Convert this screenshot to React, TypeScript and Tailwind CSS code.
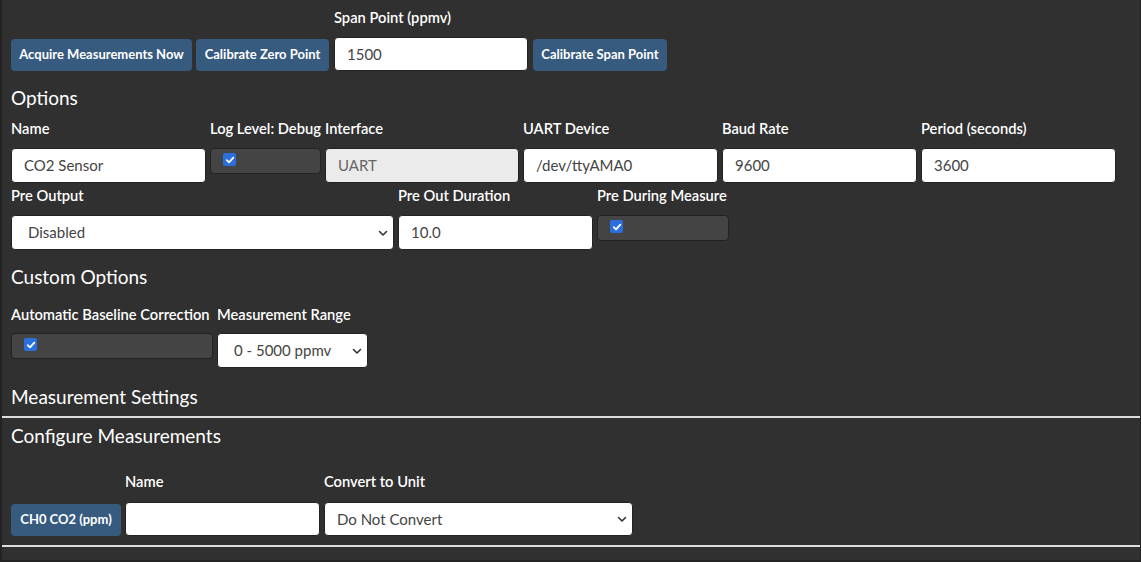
import React from "react";

const Chevron = () => (
  <svg width="10" height="10" viewBox="0 0 10 10" className="pointer-events-none absolute right-[5px] top-1/2 -translate-y-1/2">
    <path d="M1.5 3.5 L5 7 L8.5 3.5" fill="none" stroke="#333" strokeWidth="1.6" strokeLinecap="round" strokeLinejoin="round" />
  </svg>
);

function Label({ children, className = "" }: { children: React.ReactNode; className?: string }) {
  return <div className={"text-[14.7px] leading-[20px] font-semibold text-white whitespace-nowrap " + className}>{children}</div>;
}

function TextInput({ value, className = "", disabled = false }: { value: string; className?: string; disabled?: boolean }) {
  return (
    <div
      className={
        "rounded-[4px] border border-[#222] flex items-center px-[12px] text-[15px] " +
        (disabled ? "bg-[#ebebeb] text-[#666] " : "bg-white text-[#444] ") +
        className
      }
    >
      {value}
    </div>
  );
}

function Select({ value, className = "", pl = "pl-[16px]" }: { value: string; className?: string; pl?: string }) {
  return (
    <div className={"relative rounded-[4px] border border-[#222] bg-white flex items-center text-[15px] text-[#444] " + pl + " " + className}>
      {value}
      <Chevron />
    </div>
  );
}

function Check({ className = "" }: { className?: string }) {
  return (
    <div className={"h-[26px] rounded-[4px] border border-[#222] bg-[#444] pl-[12px] pt-[4px] " + className}>
      <div className="w-[13px] h-[13px] rounded-[2px] bg-[#2a6fdb] flex items-center justify-center">
        <svg width="10" height="10" viewBox="0 0 10 10">
          <path d="M1.8 5.2 L4 7.3 L8.3 2.6" fill="none" stroke="white" strokeWidth="1.8" strokeLinecap="round" strokeLinejoin="round" />
        </svg>
      </div>
    </div>
  );
}

function Btn({ children, className = "" }: { children: React.ReactNode; className?: string }) {
  return (
    <div className={"h-[32px] rounded-[4px] bg-[#375a7f] text-white text-[13px] font-bold flex items-center justify-center whitespace-nowrap " + className}>
      {children}
    </div>
  );
}

export default function App() {
  return (
    <div
      className="w-[1141px] h-[562px] bg-[#303030] border-l-2 border-r border-b-2 border-[#232323] overflow-hidden text-white"
      style={{ fontFamily: "Lato, 'Noto Sans', sans-serif" }}
    >
      {/* top row */}
      <div className="flex items-end pl-[9px] pt-[7px]">
        <Btn className="w-[181px]">Acquire Measurements Now</Btn>
        <Btn className="w-[133px] ml-[4px]">Calibrate Zero Point</Btn>
        <div className="flex flex-col ml-[5px]">
          <Label className="mb-[10px]">Span Point (ppmv)</Label>
          <TextInput value="1500" className="w-[194px] h-[34px]" />
        </div>
        <Btn className="w-[134px] ml-[5px]">Calibrate Span Point</Btn>
      </div>

      <div className="pl-[9px] mt-[15px] text-[19px] leading-[23px]">Options</div>

      <div className="flex pl-[9px] mt-[9px] gap-[4px]">
        <div className="flex flex-col w-[195px]">
          <Label>Name</Label>
          <TextInput value="CO2 Sensor" className="mt-[10px] h-[35px]" />
        </div>
        <div className="flex flex-col w-[111px]">
          <Label>Log Level: Debug</Label>
          <Check className="mt-[10px]" />
        </div>
        <div className="flex flex-col w-[194px]">
          <Label>Interface</Label>
          <TextInput value="UART" disabled className="mt-[10px] h-[35px]" />
        </div>
        <div className="flex flex-col w-[195px]">
          <Label>UART Device</Label>
          <TextInput value="/dev/ttyAMA0" className="mt-[10px] h-[35px]" />
        </div>
        <div className="flex flex-col w-[195px]">
          <Label>Baud Rate</Label>
          <TextInput value="9600" className="mt-[10px] h-[35px]" />
        </div>
        <div className="flex flex-col w-[195px]">
          <Label>Period (seconds)</Label>
          <TextInput value="3600" className="mt-[10px] h-[35px]" />
        </div>
      </div>

      <div className="flex pl-[9px] mt-[2px] gap-[4px]">
        <div className="flex flex-col w-[383px]">
          <Label>Pre Output</Label>
          <Select value="Disabled" className="mt-[10px] h-[35px]" />
        </div>
        <div className="flex flex-col w-[195px]">
          <Label>Pre Out Duration</Label>
          <TextInput value="10.0" className="mt-[10px] h-[35px]" />
        </div>
        <div className="flex flex-col w-[132px]">
          <Label>Pre During Measure</Label>
          <Check className="mt-[10px]" />
        </div>
      </div>

      <div className="pl-[9px] mt-[15px] text-[19px] leading-[23px]">Custom Options</div>

      <div className="flex pl-[9px] mt-[16px] gap-[4px]">
        <div className="flex flex-col w-[202px]">
          <Label>Automatic Baseline Correction</Label>
          <Check className="mt-[9px]" />
        </div>
        <div className="flex flex-col w-[151px]">
          <Label>Measurement Range</Label>
          <Select value="0 - 5000 ppmv" className="mt-[9px] h-[35px]" />
        </div>
      </div>

      <div className="pl-[9px] mt-[17px] text-[19px] leading-[23px]">Measurement Settings</div>
      <div className="mt-[8px] h-[2px] bg-[#dddddd]" />
      <div className="pl-[9px] mt-[6px] text-[19px] leading-[23px]">Configure Measurements</div>

      <div className="flex items-end pl-[9px] mt-[24px] gap-[4px]">
        <Btn className="w-[110px]">CH0 CO2 (ppm)</Btn>
        <div className="flex flex-col w-[195px]">
          <Label>Name</Label>
          <TextInput value="" className="mt-[11px] h-[34px]" />
        </div>
        <div className="flex flex-col w-[309px]">
          <Label>Convert to Unit</Label>
          <Select value="Do Not Convert" pl="pl-[12px]" className="mt-[11px] h-[34px]" />
        </div>
      </div>
      <div className="mt-[9px] h-[2px] bg-[#dddddd]" />
    </div>
  );
}
